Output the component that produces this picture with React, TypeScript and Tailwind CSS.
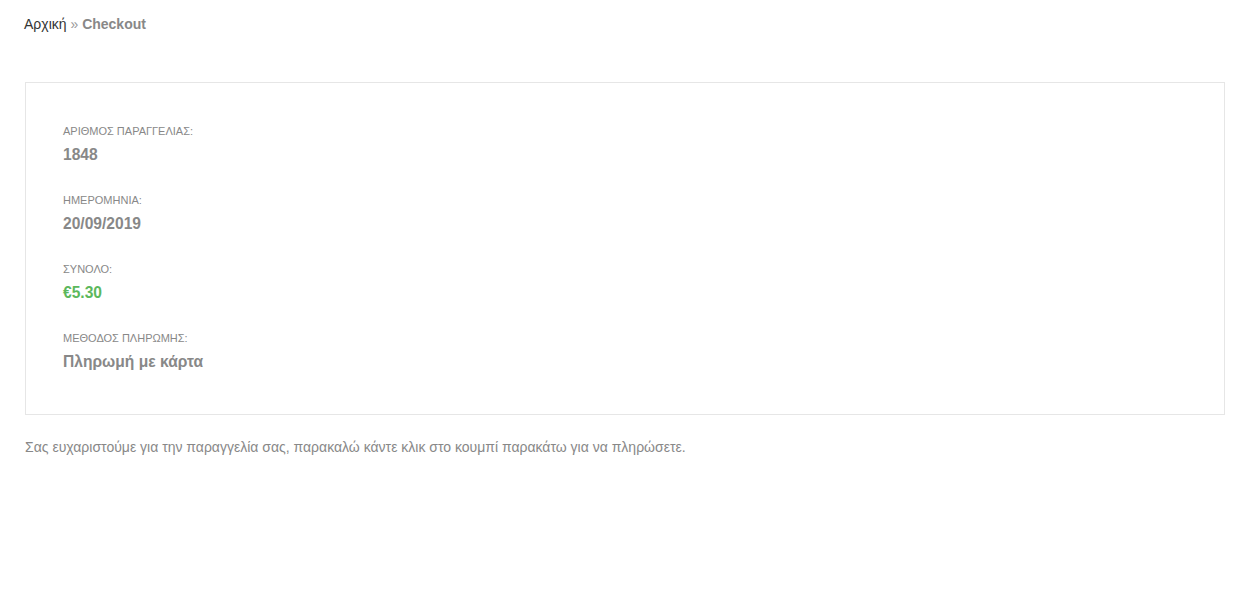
const items = [
  { label: "ΑΡΙΘΜΟΣ ΠΑΡΑΓΓΕΛΙΑΣ:", value: "1848" },
  { label: "ΗΜΕΡΟΜΗΝΙΑ:", value: "20/09/2019" },
  { label: "ΣΥΝΟΛΟ:", value: "€5.30", green: true },
  { label: "ΜΕΘΟΔΟΣ ΠΛΗΡΩΜΗΣ:", value: "Πληρωμή με κάρτα" },
];

export default function App() {
  return (
    <div className="min-h-screen bg-white pl-[25px] pr-[29px] pt-[14px] font-['Liberation_Sans',Arial,sans-serif]">
      <nav className="text-[14px] leading-5 -ml-px">
        <a href="#" className="text-[#333]">Αρχική</a>
        <span className="text-[#999]"> » </span>
        <span className="font-bold text-[#888]">Checkout</span>
      </nav>

      <div className="mt-[48px] border border-[#e6e6e6] pl-[37px] pt-[40px] pb-[42px]">
        <ul className="flex flex-col gap-[27px]">
          {items.map((it) => (
            <li key={it.label} className="flex flex-col gap-[6px]">
              <span className="text-[11px] leading-4 text-[#888]">{it.label}</span>
              <strong
                className={
                  "text-[15.6px] leading-5 font-bold " +
                  (it.green ? "text-[#5cb85c]" : "text-[#888]")
                }
              >
                {it.value}
              </strong>
            </li>
          ))}
        </ul>
      </div>

      <p className="mt-[22px] text-[14px] leading-5 text-[#888]">
        Σας ευχαριστούμε για την παραγγελία σας, παρακαλώ κάντε κλικ στο κουμπί παρακάτω για να πληρώσετε.
      </p>
    </div>
  );
}
